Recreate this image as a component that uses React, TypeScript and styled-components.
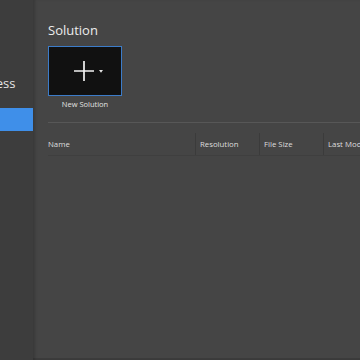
import React from "react";
import styled, { createGlobalStyle } from "styled-components";

const Global = createGlobalStyle`
  html, body { margin: 0; padding: 0; background: #454545; overflow: hidden; }
  body { font-family: "Segoe UI", "Open Sans", "Noto Sans", sans-serif; }
`;

const Shell = styled.div`
  display: flex;
  width: 360px;
  height: 360px;
  overflow: hidden;
  background: #454545;
`;

const Sidebar = styled.nav`
  flex: 0 0 33px;
  background: #3d3d3d;
  overflow: hidden;
  display: flex;
  flex-direction: column;
  padding-top: 74px;
  box-sizing: border-box;
`;

const NavLabel = styled.div`
  margin-left: -38px;
  white-space: nowrap;
  font-size: 13px;
  line-height: 18px;
  color: #e6e6e6;
`;

const NavItem = styled.div<{ $active?: boolean }>`
  height: 23px;
  margin-top: 16px;
  background: ${(p) => (p.$active ? "#3f8fe9" : "transparent")};
`;

const Main = styled.main`
  flex: 1;
  min-width: 0;
  display: flex;
  flex-direction: column;
  padding: 20px 0 0 15px;
  box-shadow: inset 3px 0 3px -1px rgba(0, 0, 0, 0.18), inset 0 -7px 0 -5px rgba(0, 0, 0, 0.12);
`;

const Title = styled.h1`
  margin: 0;
  font-size: 13px;
  font-weight: 400;
  line-height: 20px;
  color: #ececec;
`;

const TileWrap = styled.div`
  margin-top: 6px;
  width: 74px;
  display: flex;
  flex-direction: column;
  align-items: center;
`;

const Tile = styled.button`
  width: 74px;
  height: 50px;
  box-sizing: border-box;
  border: 1.5px solid #3c7cc9;
  background: #111111;
  display: flex;
  align-items: center;
  justify-content: center;
  padding: 0;
`;

const TileLabel = styled.div`
  margin-top: 3px;
  font-size: 7.5px;
  line-height: 10px;
  color: #e2e2e2;
  white-space: nowrap;
`;

const Separator = styled.hr`
  margin: 13px 0 0 0;
  border: none;
  border-top: 1px solid #575757;
  width: 100%;
`;

const HeaderRow = styled.div`
  margin-top: 10px;
  display: grid;
  grid-template-columns: 147px 64px 64px 120px;
  height: 22px;
  border-bottom: 1px solid #3f3f3f;
  width: max-content;
`;

const HeaderCell = styled.div<{ $first?: boolean }>`
  display: flex;
  align-items: center;
  padding-left: ${(p) => (p.$first ? "0" : "4px")};
  border-left: ${(p) => (p.$first ? "none" : "1px solid #3b3b3b")};
  font-size: 7.8px;
  color: #dedede;
  white-space: nowrap;
`;

export default function App() {
  return (
    <>
      <Global />
      <Shell>
        <Sidebar>
          <NavLabel>Business</NavLabel>
          <NavItem $active />
        </Sidebar>
        <Main>
          <Title>Solution</Title>
          <TileWrap>
            <Tile>
              <svg width="40" height="22" viewBox="0 0 40 22">
                <path d="M19 1 V21 M9 11 H29" stroke="#f2f2f2" strokeWidth="1.7" fill="none" />
                <path d="M34 10 L38 10 L36 12.8 Z" fill="#e6e6e6" />
              </svg>
            </Tile>
            <TileLabel>New Solution</TileLabel>
          </TileWrap>
          <Separator />
          <HeaderRow>
            <HeaderCell $first>Name</HeaderCell>
            <HeaderCell>Resolution</HeaderCell>
            <HeaderCell>File Size</HeaderCell>
            <HeaderCell>Last Modified</HeaderCell>
          </HeaderRow>
        </Main>
      </Shell>
    </>
  );
}
